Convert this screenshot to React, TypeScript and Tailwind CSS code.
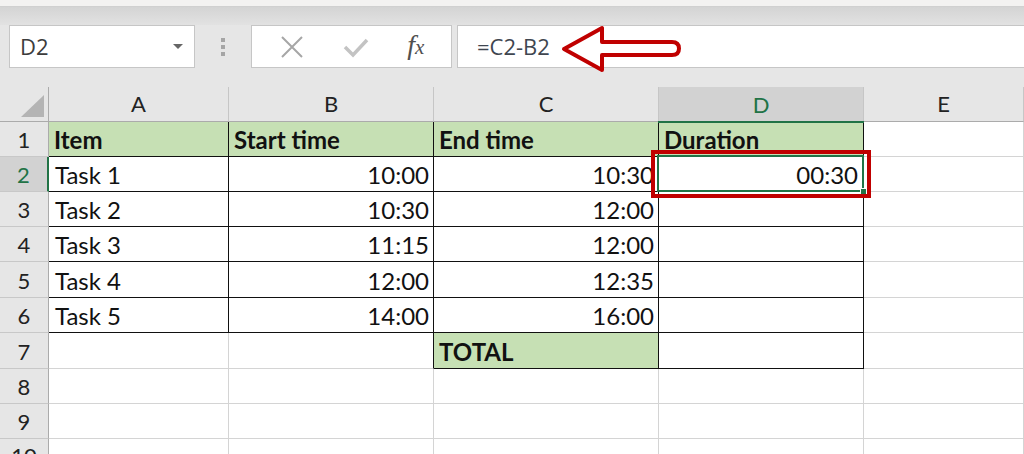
import React from 'react';

type Cell = { v: string; kind: 'text' | 'num' | 'head' | 'empty' };

const body: Cell[][] = [
  [
    { v: 'Item', kind: 'head' },
    { v: 'Start time', kind: 'head' },
    { v: 'End time', kind: 'head' },
    { v: 'Duration', kind: 'head' },
  ],
  [
    { v: 'Task 1', kind: 'text' },
    { v: '10:00', kind: 'num' },
    { v: '10:30', kind: 'num' },
    { v: '00:30', kind: 'num' },
  ],
  [
    { v: 'Task 2', kind: 'text' },
    { v: '10:30', kind: 'num' },
    { v: '12:00', kind: 'num' },
    { v: '', kind: 'empty' },
  ],
  [
    { v: 'Task 3', kind: 'text' },
    { v: '11:15', kind: 'num' },
    { v: '12:00', kind: 'num' },
    { v: '', kind: 'empty' },
  ],
  [
    { v: 'Task 4', kind: 'text' },
    { v: '12:00', kind: 'num' },
    { v: '12:35', kind: 'num' },
    { v: '', kind: 'empty' },
  ],
  [
    { v: 'Task 5', kind: 'text' },
    { v: '14:00', kind: 'num' },
    { v: '16:00', kind: 'num' },
    { v: '', kind: 'empty' },
  ],
];

const RowHeader = ({ n, selected }: { n: number; selected?: boolean }) => (
  <div
    className={
      selected
        ? 'flex items-center justify-center leading-none pt-[2px] bg-[#d2d2d2] border-b border-[#c8c8c8] border-r-2 border-r-[#217346] text-[#217346] text-[22px]'
        : 'flex items-center justify-center leading-none pt-[2px] bg-[#e6e6e6] border-b border-[#c8c8c8] border-r border-r-[#ababab] text-[#222] text-[22px]'
    }
  >
    {n}
  </div>
);

const GridCell = ({ dark, darkRight }: { dark?: boolean; darkRight?: boolean }) => {
  const r = darkRight || dark ? 'border-r-[#111]' : 'border-r-[#d4d4d4]';
  const b = dark ? 'border-b-[#111]' : 'border-b-[#d4d4d4]';
  return <div className={`bg-white border-r border-b ${r} ${b}`} />;
};

const DataCell = ({ cell, col, row }: { cell: Cell; col: number; row: number }) => {
  const base = 'flex items-center leading-none pt-[2px] border-r border-b border-[#111] text-[24px] text-[#111]';
  if (cell.kind === 'head') {
    return (
      <div className={`${base} bg-[#c6e0b4] font-bold pl-[5px] relative`}>
        {col === 3 && <div className="absolute -left-px -top-[1px] right-[-1px] h-[2px] bg-[#217346]" />}
        {cell.v}
      </div>
    );
  }
  if (row === 1 && col === 3) {
    return (
      <div className={`${base} bg-white justify-end pr-[5px] relative`}>
        <div className="absolute -left-[2px] -top-[2px] -right-px -bottom-px border-2 border-[#217346]" />
        <div className="absolute right-[-4px] bottom-[-4px] w-[7px] h-[7px] bg-[#217346] border border-white" />
        <div className="absolute -left-[8px] -top-[7px] -right-[8px] -bottom-[7px] border-[4px] border-[#c00000]" />
        <span className="relative">{cell.v}</span>
      </div>
    );
  }
  if (cell.kind === 'num') {
    return <div className={`${base} bg-white justify-end pr-[4px]`}>{cell.v}</div>;
  }
  return <div className={`${base} bg-white pl-[6px]`}>{cell.v}</div>;
};

const App = () => {
  const letters = ['A', 'B', 'C', 'D', 'E'];

  return (
    <div className="w-[1024px] h-[454px] overflow-hidden bg-[#e6e6e6] font-['Lato','Open_Sans',sans-serif] select-none">
      {/* ribbon edge */}
      <div className="h-[7px] bg-[#f3f2f1] border-b border-[#d0d0d0]" />
      <div className="h-[18px] bg-gradient-to-b from-[#d4d4d4] to-[#e2e2e2]" />

      {/* formula row */}
      <div className="relative flex items-stretch h-[43px] pl-[9px]">
        <div className="w-[186px] bg-white border border-[#c6c6c6] flex items-center justify-between pl-[10px] pr-[11px]">
          <span className="text-[22px] text-[#3c3c3c] font-['Open_Sans',sans-serif]">D2</span>
          <span className="w-0 h-0 border-l-[5px] border-r-[5px] border-t-[5px] border-l-transparent border-r-transparent border-t-[#666]" />
        </div>
        <div className="w-[56px] flex flex-col items-center justify-center gap-[3px]">
          <span className="w-[4px] h-[4px] bg-[#a5a5a5]" />
          <span className="w-[4px] h-[4px] bg-[#a5a5a5]" />
          <span className="w-[4px] h-[4px] bg-[#a5a5a5]" />
        </div>
        <div className="w-[201px] bg-white border border-[#c6c6c6] flex items-center justify-around px-[8px]">
          <svg width="26" height="24" viewBox="0 0 26 24">
            <path d="M3 2 L23 22 M23 2 L3 22" stroke="#a6a6a6" strokeWidth="2" fill="none" />
          </svg>
          <svg width="28" height="22" viewBox="0 0 28 22">
            <path d="M3 11 L11 19 L25 4" stroke="#c3c3c3" strokeWidth="3.5" fill="none" />
          </svg>
          <span className="text-[28px] italic text-[#505050] font-['Liberation_Serif',serif] leading-none -mt-[4px]">
            f<span className="text-[21px]">x</span>
          </span>
        </div>
        <div className="ml-[5px] flex-1 bg-white border border-r-0 border-[#c6c6c6] flex items-center pl-[19px]">
          <span className="text-[22px] text-[#3f4650] font-['Open_Sans',sans-serif]">=C2-B2</span>
        </div>
        <svg className="absolute left-0 top-0 pointer-events-none" width="1024" height="60" viewBox="0 25 1024 60">
          <path
            d="M564 49 L602 28 L602 42 L672 42 Q679 42 679 48.5 Q679 55 672 55 L602 55 L602 70 Z"
            fill="white"
            stroke="#c00000"
            strokeWidth="4"
            strokeLinejoin="round"
          />
        </svg>
      </div>

      <div className="h-[19px]" />

      {/* sheet */}
      <div className="grid grid-cols-[49px_180px_205px_225px_205px_1fr] grid-rows-[35px_35px_35px_35px_35px_36px_35px_36px_35px_35px_20px]">
        {/* column headers */}
        <div className="relative bg-[#e6e6e6] border-r border-b border-[#ababab]">
          <svg className="absolute right-[4px] bottom-[4px]" width="23" height="22" viewBox="0 0 23 22">
            <path d="M23 0 L23 22 L0 22 Z" fill="#b4b4b4" />
          </svg>
        </div>
        {letters.map((l) =>
          l === 'D' ? (
            <div key={l} className="flex items-center justify-center leading-none bg-[#d2d2d2] border-r border-[#c6c6c6] text-[22px] text-[#217346]">
              {l}
            </div>
          ) : (
            <div key={l} className="flex items-center justify-center leading-none bg-[#e6e6e6] border-r border-b border-r-[#c6c6c6] border-b-[#ababab] text-[22px] text-[#222]">
              {l}
            </div>
          )
        )}

        {/* rows 1-6 */}
        {body.map((r, ri) => (
          <React.Fragment key={ri}>
            <RowHeader n={ri + 1} selected={ri === 1} />
            {r.map((c, ci) => (
              <DataCell key={ci} cell={c} col={ci} row={ri} />
            ))}
            <GridCell />
          </React.Fragment>
        ))}

        {/* row 7 */}
        <RowHeader n={7} />
        <GridCell />
        <GridCell darkRight />
        <div className="flex items-center leading-none pt-[2px] bg-[#c6e0b4] border-r border-b border-[#111] text-[24px] text-[#111] font-bold pl-[5px]">
          TOTAL
        </div>
        <GridCell dark />
        <GridCell />

        {/* rows 8-10 */}
        {[8, 9, 10].map((n) => (
          <React.Fragment key={n}>
            {n === 10 ? (
              <div className="flex items-start justify-center bg-[#e6e6e6] border-r border-r-[#ababab] text-[#222] text-[22px] overflow-hidden">
                <span className="leading-none pt-[6px]">{n}</span>
              </div>
            ) : (
              <RowHeader n={n} />
            )}
            <GridCell />
            <GridCell />
            <GridCell />
            <GridCell />
            <GridCell />
          </React.Fragment>
        ))}
      </div>
    </div>
  );
};

export default App;
